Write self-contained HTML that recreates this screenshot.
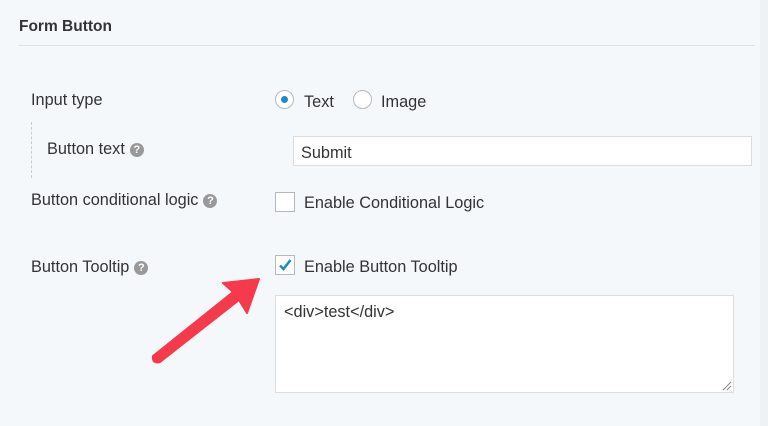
<!DOCTYPE html>
<html><head><style>
body{margin:0;width:768px;height:426px;background:#f4f8fb;font-family:"Liberation Sans",sans-serif;color:#333;position:relative;overflow:hidden}
.a{position:absolute;white-space:nowrap;font-size:16.3px}
.q{display:inline-block;width:14px;height:14px;border-radius:50%;background:#999;color:#fff;font-size:11px;font-weight:bold;text-align:center;line-height:14px;vertical-align:1px;margin-left:5px}
.box{position:absolute;background:#fff;border:1px solid #ddd;box-sizing:border-box}
</style></head><body>
<div style="position:absolute;right:0;top:0;width:8px;height:426px;background:#eef2f5"></div>
<div class="a" style="left:19px;top:18px;font-weight:bold;font-size:15.5px;color:#333">Form Button</div>
<div style="position:absolute;left:18px;top:45px;width:737px;height:1px;background:#dfe3e6"></div>
<div class="a" style="left:31px;top:91px">Input type</div>
<div style="position:absolute;left:31px;top:122px;height:56px;border-left:1px dashed #ccc"></div>
<div class="a" style="left:47px;top:140px">Button text<span class="q">?</span></div>
<div class="a" style="left:31px;top:191px">Button conditional logic<span class="q">?</span></div>
<div class="a" style="left:31px;top:258px">Button Tooltip<span class="q">?</span></div>

<div class="box" style="left:275px;top:90px;width:19px;height:19px;border-radius:50%;border-color:#b4b9be"><div style="position:absolute;left:5px;top:5px;width:7px;height:7px;border-radius:50%;background:#1e8cbe"></div></div>
<div class="a" style="left:304px;top:93px">Text</div>
<div class="box" style="left:353px;top:90px;width:19px;height:19px;border-radius:50%;border-color:#b4b9be"></div>
<div class="a" style="left:381px;top:93px">Image</div>

<div class="box" style="left:293px;top:136px;width:459px;height:30px"></div>
<div class="a" style="left:301px;top:144px">Submit</div>

<div class="box" style="left:275px;top:192px;width:20px;height:20px;border-color:#b4b9be"></div>
<div class="a" style="left:304px;top:194px">Enable Conditional Logic</div>

<div class="box" style="left:275px;top:255px;width:20px;height:20px;border-color:#b4b9be"><svg width="18" height="18" style="position:absolute;left:0;top:0"><path d="M4 9.5 L7.5 13 L14.5 4" fill="none" stroke="#1e8cbe" stroke-width="2.6"/></svg></div>
<div class="a" style="left:304px;top:258px">Enable Button Tooltip</div>

<div class="box" style="left:275px;top:295px;width:459px;height:98px"></div>
<div class="a" style="left:284px;top:303px">&lt;div&gt;test&lt;/div&gt;</div>
<svg width="10" height="10" style="position:absolute;left:722px;top:381px"><path d="M1 9L9 1M5 9L9 5" stroke="#888" stroke-width="1"/></svg>

<svg width="768" height="426" style="position:absolute;left:0;top:0">
<path d="M259 279 L223 283 L233 292 L153 356 Q152 364 160 362 L239 300 L247 313 Z" fill="#f43a4b" stroke="#f43a4b" stroke-width="2" stroke-linejoin="round"/>
</svg>
</body></html>
